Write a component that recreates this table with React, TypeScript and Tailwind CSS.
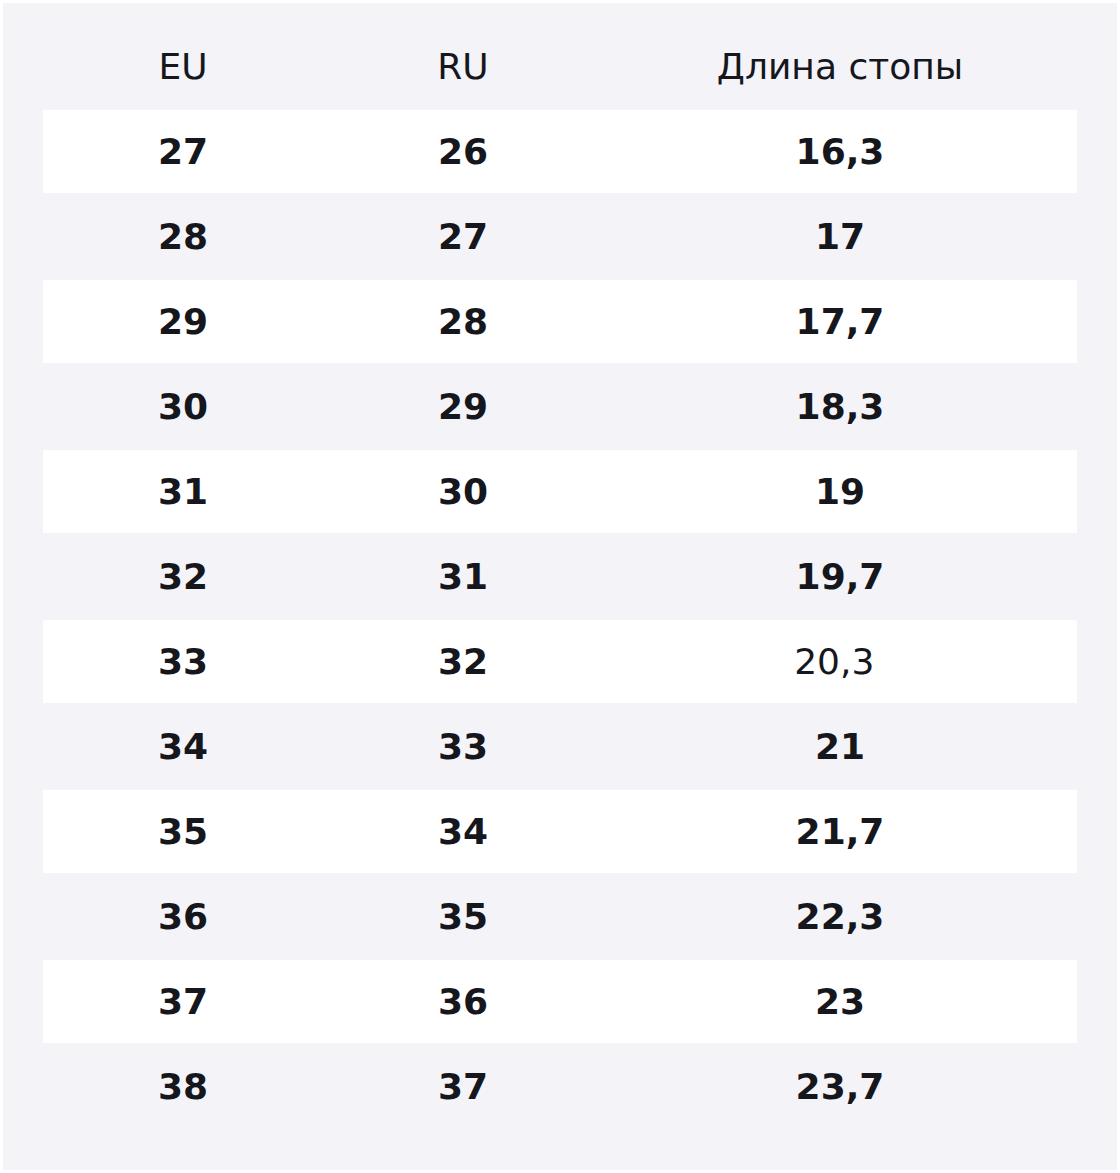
const rows: [string, string, string, boolean?][] = [
  ["27", "26", "16,3"],
  ["28", "27", "17"],
  ["29", "28", "17,7"],
  ["30", "29", "18,3"],
  ["31", "30", "19"],
  ["32", "31", "19,7"],
  ["33", "32", "20,3\u00a0", true],
  ["34", "33", "21"],
  ["35", "34", "21,7"],
  ["36", "35", "22,3"],
  ["37", "36", "23"],
  ["38", "37", "23,7"],
];

export default function App() {
  return (
    <div className="bg-white p-[3px]" style={{ fontFamily: '"DejaVu Sans", sans-serif' }}>
      <div className="bg-[#f3f3f8] px-10 pt-5 pb-10 text-[36px] leading-none text-[#16161d]">
        <div className="grid h-[87px] grid-cols-[280px_280px_1fr] items-center text-center">
          <div>EU</div>
          <div>RU</div>
          <div>Длина стопы</div>
        </div>
        {rows.map(([eu, ru, len, light], i) => (
          <div
            key={eu}
            className={`grid grid-cols-[280px_280px_1fr] items-center text-center font-bold ${
              i % 2 === 0 ? "h-[83px] bg-white" : "h-[87px] bg-[#f4f4f8]"
            }`}
          >
            <div>{eu}</div>
            <div>{ru}</div>
            <div className={light ? "font-normal" : ""}>{len}</div>
          </div>
        ))}
      </div>
    </div>
  );
}
